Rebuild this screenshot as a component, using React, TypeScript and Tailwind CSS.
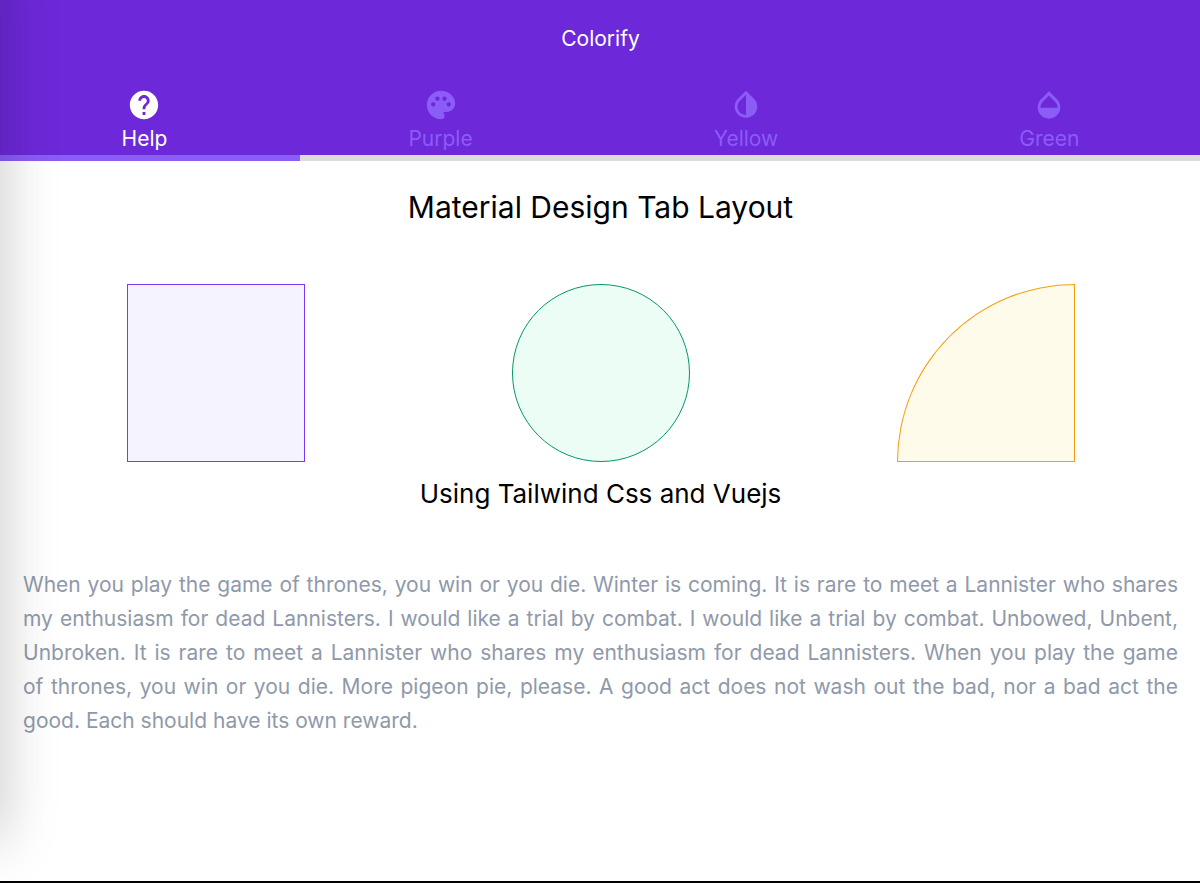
import { useState } from "react";
import { MdHelp, MdPalette, MdInvertColors, MdOpacity } from "react-icons/md";

const tabs = [
  { name: "Help", Icon: MdHelp },
  { name: "Purple", Icon: MdPalette },
  { name: "Yellow", Icon: MdInvertColors },
  { name: "Green", Icon: MdOpacity },
];

export default function App() {
  const [active, setActive] = useState(0);
  return (
    <div className="relative min-h-screen overflow-hidden border-b-2 border-black bg-white font-['Inter',sans-serif] text-black">
      <header className="bg-[#6d28d9] pl-px">
        <h1 className="pt-[21px] text-center text-[21px] leading-9 text-white">Colorify</h1>
        <nav className="flex justify-around pt-[31px]" aria-label="Colors">
          {tabs.map(({ name, Icon }, i) => (
            <button
              key={name}
              type="button"
              onClick={() => setActive(i)}
              className={`flex flex-col items-center text-[21px] leading-[33px] ${i === active ? "text-white" : "text-[#8b5cf6]"}`}
            >
              <Icon className="size-[34px]" aria-hidden="true" />
              {name}
            </button>
          ))}
        </nav>
      </header>
      <div className="h-1.5 bg-[#dcdcdc]">
        <div className="h-full w-1/4 bg-[#8b5cf6]" />
      </div>
      <main className="pl-px">
        <h2 className="pt-6 text-center text-[30px] leading-[44px]">Material Design Tab Layout</h2>
        <div className="flex justify-around px-[22px] pt-[55px]">
          <div className="size-[178px] border border-[#7c3aed] bg-[#f5f3ff]" />
          <div className="size-[178px] rounded-full border border-[#059669] bg-[#ecfdf5]" />
          <div className="size-[178px] rounded-tl-full border border-[#f59e0b] bg-[#fffbeb]" />
        </div>
        <h3 className="pt-3 text-center text-[26px] leading-10">Using Tailwind Css and Vuejs</h3>
        <p className="px-[22px] pt-[54px] text-justify text-[21px] leading-[34px] text-[#8f99aa]">
          When you play the game of thrones, you win or you die. Winter is coming. It is rare to meet a Lannister who shares my enthusiasm for dead Lannisters. I would like a trial by combat. I would like a trial by combat. Unbowed, Unbent, Unbroken. It is rare to meet a Lannister who shares my enthusiasm for dead Lannisters. When you play the game of&nbsp;thrones, you win or you die. More pigeon pie, please. A good act does not wash out the bad, nor a bad act the good. Each should have its own reward.
        </p>
      </main>
      <div className="pointer-events-none absolute -top-10 right-full bottom-10 w-10 shadow-[0_0_56px_rgba(0,0,0,0.25)]" />
    </div>
  );
}
